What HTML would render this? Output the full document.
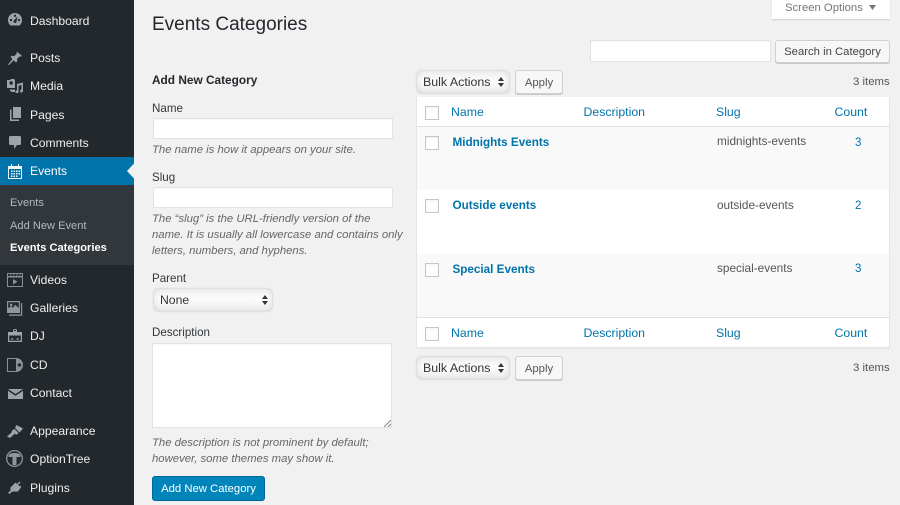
<!DOCTYPE html>
<html><head><meta charset="utf-8">
<style>
html,body{margin:0;padding:0;width:900px;height:505px;overflow:hidden;background:#f1f1f1;font-family:"Liberation Sans",sans-serif;font-size:12px;color:#444}
#w{position:absolute;left:0;top:0;width:900px;height:505px;filter:blur(.3px);overflow:hidden}
.t,.b,.i{position:absolute;white-space:nowrap}
.t{line-height:18px;height:18px}
.m{color:#eee;left:30px;font-size:12.150px}
.s{color:#b4b9be;left:10px;font-size:11.100px}
.l{color:#32373c;left:152px;font-size:11.600px}
.d{color:#666;left:152px;font-size:11.330px;font-style:italic}
.h{font-size:12.300px;color:#0073aa}
.n{font-size:11.700px;font-weight:bold;color:#0073aa;left:452.500px}
.g{font-size:11.800px;color:#555;left:717px}
.c{font-size:11.500px;color:#0073aa;left:855px}
.b{box-sizing:border-box}
.inp{background:#fff;border:1px solid #e2e2e2;box-shadow:inset 0 1px 1px rgba(0,0,0,.03)}
.cb{position:absolute;box-sizing:border-box;width:14px;height:14px;left:425px;background:#fff;border:1px solid #c4c7ca;box-shadow:inset 0 1px 2px rgba(0,0,0,.06)}
.btn{background:#f7f7f7;border:1px solid #d0d0d0;border-radius:3px;box-shadow:0 1px 0 #c8c8c8;color:#555;font-size:11.300px;text-align:center}
.sel{background:linear-gradient(#ececec,#fbfbfb 40%,#f5f5f5 70%,#e6e6e6);border-radius:4px;box-shadow:0 0 2px rgba(0,0,0,.22),inset 4px 0 4px -2px rgba(0,0,0,.06),inset -4px 0 4px -2px rgba(0,0,0,.06);color:#333}
svg.i{fill:#9ea3a8}
</style></head><body><div id="w">
<div class="b" style="left:0;top:0;width:134px;height:505px;background:#23282d"></div>
<div class="b" style="left:0;top:185px;width:134px;height:80px;background:#32373c"></div>
<div class="b" style="left:0;top:157px;width:134px;height:28px;background:#0073aa"></div>
<svg class="i" style="left:127px;top:163px;fill:#f1f1f1" width="7" height="16"><path d="M7 0.500L0 8l7 7.500z"/></svg>

<svg class="i" style="left:8px;top:13px" width="14" height="13" viewBox="0 0 14 13"><path fill-rule="evenodd" d="M7 0a7 7 0 0 0-7 7c0 2.300 1 4.200 2.300 5.500h9.400C13 11.200 14 9.300 14 7a7 7 0 0 0-7-7zM6 1.800h2v2H6zM2 6h2v2H2zm8 0h2v2h-2zM7 10a1.500 1.500 0 0 1-1-2.600L9.500 3.500 8.500 8.500A1.500 1.500 0 0 1 7 10z"/></svg>
<svg class="i" style="left:8px;top:52px" width="14" height="13" viewBox="0 0 14 13"><path d="M9.500 0L14 4l-1.500.6-1-.1L9 7l.3 2.200L8 10.500 5.700 8.200 1 13l-1-.5 4.500-5.500L2.500 5l1.300-1.200 2.300.3L8.500 2l-.2-1z"/></svg>
<svg class="i" style="left:7px;top:79px" width="16" height="14" viewBox="0 0 16 14"><path fill-rule="evenodd" d="M0 1h3l1-1h3l1 1v8H0zm2.500 3a1.700 1.700 0 1 0 3.400 0 1.700 1.700 0 0 0-3.400 0zM3 10.500h5V13H4.500L3 11.500zM10 5l6-1.500V12a1.500 1.500 0 1 1-1.500-1.500V6l-3 .7V13a1.500 1.500 0 1 1-1.500-1.500z"/></svg>
<svg class="i" style="left:9px;top:107px" width="12" height="14" viewBox="0 0 12 14"><path d="M4 0h8v11H4zM2.500 2.500V12.500H10V14H1V2.500z"/></svg>
<svg class="i" style="left:9px;top:136px" width="12" height="13" viewBox="0 0 12 13"><path d="M1.500 0h9A1.500 1.500 0 0 1 12 1.500v6A1.500 1.500 0 0 1 10.500 9H8l-3 4V9H1.500A1.500 1.500 0 0 1 0 7.500v-6A1.500 1.500 0 0 1 1.500 0z"/></svg>
<svg class="i" style="left:8px;top:164px;fill:#f4f4f4" width="14" height="15" viewBox="0 0 14 15"><path fill-rule="evenodd" d="M0 2h3V0h1v2h6V0h1v2h3v13H0zM1 5v9h12V5zM3 6.500h1.500V8H3zm2.500 0H7V8H5.500zm2.500 0h1.500V8H8zm2.500 0H12V8h-1.500zM3 9h1.500v1.500H3zm2.500 0H7v1.500H5.500zM8 9h1.500v1.500H8zm2.500 0H12v1.500h-1.500zM3 11.500h1.500V13H3zm2.500 0H7V13H5.500zm2.500 0h1.500V13H8z"/></svg>
<svg class="i" style="left:7px;top:273px;opacity:.85" width="16" height="14" viewBox="0 0 16 14"><path fill-rule="evenodd" d="M0 0h16v14H0zM1 1v2h14V1zM1 4.500V13h14V4.500zM6 6l4.500 2.700L6 11.500z"/><path d="M3 3.200l1-2.400h.8l-1 2.400zm3 0l1-2.400h.8l-1 2.400zm3 0l1-2.400h.8l-1 2.400zm3 0l1-2.400h.8l-1 2.400z"/></svg>
<svg class="i" style="left:7px;top:301px;opacity:.9" width="16" height="15" viewBox="0 0 16 15"><path fill-rule="evenodd" d="M0 0h13v12H0zm1.200 1.200v6l2.800-2 2 1.500 2.300-3 3.500 3.500V1.200zM3 2.800h2.300v2.300H3z"/><path d="M14 2h1.200v12.800H2V13.500h12z"/></svg>
<svg class="i" style="left:8px;top:329px" width="14" height="13" viewBox="0 0 14 13"><path fill-rule="evenodd" d="M5 3V1.500a2 1.500 0 0 1 4 0V3h5v10H0V3zm1-1h2V1H6zM1.200 6.500v5.300h11.600V6.500z"/><path d="M2.500 10.500c1-1.800 2.300-1.800 3.300 0zm5.500 0c1-1.800 2.300-1.800 3.300 0z"/></svg>
<svg class="i" style="left:7px;top:358px;opacity:.85" width="17" height="14" viewBox="0 0 17 14"><path fill-rule="evenodd" d="M0 0h10v14H0zM1 1v12h8V1z"/><path fill-rule="evenodd" d="M9 0a7 7 0 0 1 0 14zM12.500 8.800a1.800 1.800 0 1 0-.1 0z"/></svg>
<svg class="i" style="left:8px;top:389px" width="15" height="10" viewBox="0 0 15 10"><path d="M0 0h15L7.500 5zM0 1.800l7.500 5 7.500-5V10H0z"/></svg>
<svg class="i" style="left:7px;top:425px" width="16" height="13" viewBox="0 0 16 13"><path d="M9.500 0L16 3.500 12.500 7.500 8 3zM7.500 4l4 4-2 1.700-1.800-1L3 13 0 11.500 4.500 7.500 5 5.500z"/></svg>
<svg class="i" style="left:6px;top:450px;opacity:.9" width="17" height="17" viewBox="0 0 17 17"><path fill-rule="evenodd" d="M8.500 0a8.500 8.500 0 1 0 0 17 8.500 8.500 0 0 0 0-17zm0 1.300a7.200 7.200 0 1 1 0 14.400 7.200 7.200 0 0 1 0-14.400zM2.500 5.500C3 3.500 6 3 8.500 3s5.500.5 6 2.500V7h-4v8h-4V7h-4z"/></svg>
<svg class="i" style="left:8px;top:481px" width="14" height="13" viewBox="0 0 14 13"><path d="M7.500 1.500l1.500 1.500L11.500.5l1 1L10 4l1.500 1.200L13 4.500v1.800l-3 4.200H6l-2 .3L1.500 13 0 11.700l2.500-2.200V6.500z"/></svg>

<div class="t m" style="top:12px">Dashboard</div>
<div class="t m" style="top:49px">Posts</div>
<div class="t m" style="top:77px">Media</div>
<div class="t m" style="top:106px">Pages</div>
<div class="t m" style="top:134px">Comments</div>
<div class="t m" style="top:162px;color:#fff">Events</div>
<div class="t s" style="top:194px">Events</div>
<div class="t s" style="top:217px">Add New Event</div>
<div class="t s" style="top:239px;color:#fff;font-weight:bold">Events Categories</div>
<div class="t m" style="top:271px">Videos</div>
<div class="t m" style="top:299px">Galleries</div>
<div class="t m" style="top:327px">DJ</div>
<div class="t m" style="top:356px">CD</div>
<div class="t m" style="top:384px">Contact</div>
<div class="t m" style="top:422px">Appearance</div>
<div class="t m" style="top:450px">OptionTree</div>
<div class="t m" style="top:479px">Plugins</div>

<div class="t" style="left:152px;top:12px;font-size:19px;line-height:26px;height:26px;color:#23282d">Events Categories</div>

<div class="b" style="left:772px;top:-4px;width:118px;height:23px;background:#fff;box-shadow:0 1px 1px rgba(0,0,0,.15)"></div>
<div class="t" style="left:785px;top:-1px;font-size:11.300px;color:#72777c">Screen Options</div>
<svg class="i" style="left:869px;top:5px;fill:#72777c" width="7" height="5"><path d="M0 0h7L3.500 5z"/></svg>

<div class="b inp" style="left:590px;top:40px;width:181px;height:22px"></div>
<div class="b btn" style="left:775px;top:40px;width:115px;height:23px;line-height:23px;color:#444">Search in Category</div>
<div class="t" style="left:853px;top:73px;font-size:11.400px;color:#555">3 items</div>

<div class="t" style="left:152px;top:71px;font-weight:bold;font-size:11.850px;color:#23282d">Add New Category</div>
<div class="t l" style="top:100px">Name</div>
<div class="b inp" style="left:153px;top:118px;width:240px;height:21px"></div>
<div class="t d" style="top:141px">The name is how it appears on your site.</div>
<div class="t l" style="top:169px">Slug</div>
<div class="b inp" style="left:153px;top:187px;width:240px;height:21px"></div>
<div class="t d" style="top:210px">The “slug” is the URL-friendly version of the</div>
<div class="t d" style="top:226px">name. It is usually all lowercase and contains only</div>
<div class="t d" style="top:242px">letters, numbers, and hyphens.</div>
<div class="t l" style="top:270px">Parent</div>
<div class="b sel" style="left:154px;top:289px;width:118px;height:22px"></div>
<div class="t" style="left:160px;top:291px;font-size:12.200px;color:#333">None</div>
<svg class="i" style="left:262px;top:295px;fill:#333" width="6" height="10"><path d="M3 0l3 4H0zM3 10L0 6h6z"/></svg>
<div class="t l" style="top:324px">Description</div>
<div class="b inp" style="left:152px;top:343px;width:240px;height:85px"></div>
<svg class="i" style="left:384px;top:420px;fill:none;stroke:#888" width="7" height="7"><path d="M0 7L7 0M4 7l3-3"/></svg>
<div class="t d" style="top:434px">The description is not prominent by default;</div>
<div class="t d" style="top:450px">however, some themes may show it.</div>
<div class="b" style="left:152px;top:476px;width:113px;height:25px;background:#0085ba;border:1px solid #006799;border-radius:3px;color:#fff;font-size:11.300px;line-height:25px;text-align:center">Add New Category</div>

<div class="b sel" style="left:417px;top:71px;width:92px;height:22px"></div>
<div class="t" style="left:423px;top:73px;font-size:12.400px;color:#333">Bulk Actions</div>
<svg class="i" style="left:498px;top:77px;fill:#333" width="6" height="10"><path d="M3 0l3 4H0zM3 10L0 6h6z"/></svg>
<div class="b btn" style="left:515px;top:70px;width:48px;height:24px;line-height:24px">Apply</div>

<div class="b" style="left:416px;top:97px;width:474px;height:251px;background:#fff;border:1px solid #e5e5e5;border-top:0;box-shadow:0 1px 1px rgba(0,0,0,.04)"></div>
<div class="b" style="left:416px;top:126px;width:474px;height:1px;background:#e1e1e1"></div>
<div class="b" style="left:417px;top:127px;width:472px;height:63px;background:#f9f9f9"></div>
<div class="b" style="left:417px;top:254px;width:472px;height:63px;background:#f9f9f9"></div>
<div class="b" style="left:416px;top:317px;width:474px;height:1px;background:#e1e1e1"></div>

<div class="cb" style="top:106px"></div>
<div class="t h" style="left:451px;top:103px">Name</div>
<div class="t h" style="left:583.500px;top:103px">Description</div>
<div class="t h" style="left:716px;top:103px">Slug</div>
<div class="t h" style="left:834.500px;top:103px">Count</div>

<div class="cb" style="top:136px"></div>
<div class="t n" style="top:134px">Midnights Events</div>
<div class="t g" style="top:132px">midnights-events</div>
<div class="t c" style="top:134px">3</div>

<div class="cb" style="top:199px"></div>
<div class="t n" style="top:197px">Outside events</div>
<div class="t g" style="top:196px">outside-events</div>
<div class="t c" style="top:197px">2</div>

<div class="cb" style="top:263px"></div>
<div class="t n" style="top:261px">Special Events</div>
<div class="t g" style="top:259px">special-events</div>
<div class="t c" style="top:260px">3</div>

<div class="cb" style="top:327px"></div>
<div class="t h" style="left:451px;top:324px">Name</div>
<div class="t h" style="left:583.500px;top:324px">Description</div>
<div class="t h" style="left:716px;top:324px">Slug</div>
<div class="t h" style="left:834.500px;top:324px">Count</div>

<div class="b sel" style="left:417px;top:357px;width:92px;height:22px"></div>
<div class="t" style="left:423px;top:359px;font-size:12.400px;color:#333">Bulk Actions</div>
<svg class="i" style="left:498px;top:363px;fill:#333" width="6" height="10"><path d="M3 0l3 4H0zM3 10L0 6h6z"/></svg>
<div class="b btn" style="left:515px;top:356px;width:48px;height:24px;line-height:24px">Apply</div>
<div class="t" style="left:853px;top:359px;font-size:11.400px;color:#555">3 items</div>
</div></body></html>
